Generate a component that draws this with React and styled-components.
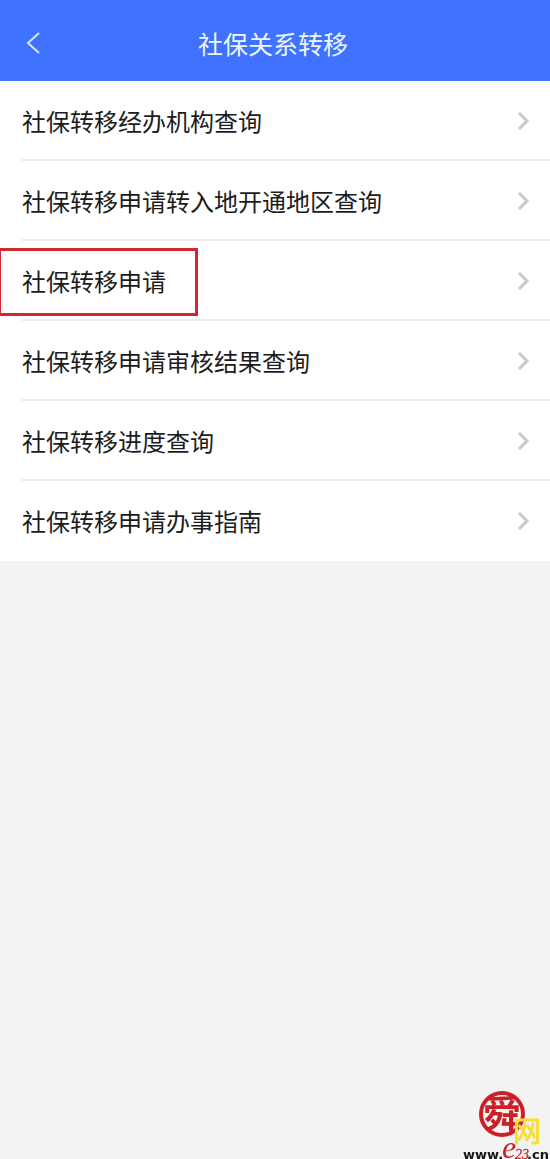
import React from "react";
import styled, { createGlobalStyle } from "styled-components";

const GlobalStyle = createGlobalStyle`
  * { box-sizing: border-box; }
  body {
    margin: 0;
    background: #f3f3f3;
    font-family: "Noto Sans CJK SC", sans-serif;
  }
`;

const Page = styled.div`
  min-height: 100vh;
  background: #f3f3f3;
`;

const Header = styled.header`
  display: grid;
  grid-template-columns: 64px 1fr 68px;
  align-items: center;
  height: 81px;
  padding-top: 4px;
  background: #3f73ff;
  color: #eef5ff;
`;

const BackButton = styled.button`
  display: flex;
  align-items: center;
  height: 48px;
  padding: 0 0 0 24px;
  border: 0;
  background: none;
  color: #d5e6ff;
  cursor: pointer;
`;

const Title = styled.h1`
  margin: 0;
  font-size: 25px;
  font-weight: 400;
  line-height: 36px;
  text-align: center;
`;

const Menu = styled.ul`
  margin: 0;
  padding: 0;
  list-style: none;
  background: #fff;
`;

const MenuItem = styled.li`
  position: relative;
  padding-left: 22px;

  &:last-child > a {
    border-bottom-color: transparent;
  }
`;

const MenuLink = styled.a`
  display: flex;
  align-items: center;
  justify-content: space-between;
  height: 80px;
  padding: 2px 20px 0 0;
  border-bottom: 2px solid #ececec;
  color: #1c1c1c;
  font-size: 24px;
  line-height: 36px;
  text-decoration: none;
`;

const Highlight = styled.span`
  position: absolute;
  top: 7px;
  left: -2px;
  width: 200px;
  height: 68px;
  border: 3px solid #d0282e;
  pointer-events: none;
`;

const Watermark = styled.div`
  position: fixed;
  right: 0;
  bottom: 0;
  width: 88px;
  height: 70px;
  pointer-events: none;
`;

const items = [
  { label: "社保转移经办机构查询" },
  { label: "社保转移申请转入地开通地区查询" },
  { label: "社保转移申请", highlighted: true },
  { label: "社保转移申请审核结果查询" },
  { label: "社保转移进度查询" },
  { label: "社保转移申请办事指南" },
];

function BackIcon() {
  return (
    <svg width="18" height="24" viewBox="0 0 18 24" fill="none" stroke="currentColor" strokeWidth="2" aria-hidden="true">
      <path d="M15 2 4 12l11 10" />
    </svg>
  );
}

function ChevronIcon() {
  return (
    <svg width="14" height="20" viewBox="0 0 14 20" fill="none" stroke="#c8c8c8" strokeWidth="3" aria-hidden="true">
      <path d="m3 2 8 8-8 8" />
    </svg>
  );
}

function SiteLogo() {
  return (
    <svg width="88" height="70" viewBox="0 0 88 70" role="img" aria-label="舜网 www.e23.cn">
      <circle cx="40" cy="25" r="21" fill="#fbf5f4" stroke="#cc2029" strokeWidth="4" />
      <text x="40" y="39" textAnchor="middle" fontFamily="'Noto Sans CJK SC', sans-serif" fontSize="37" fontWeight="700" fill="#cc2029">舜</text>
      <text x="51" y="53" fontFamily="'Noto Sans CJK SC', sans-serif" fontSize="28" fontWeight="400" fill="#f8de35" stroke="#f8de35" strokeWidth="1">网</text>
      <g fontFamily="'DejaVu Sans', sans-serif" fontSize="13" fontWeight="700" fill="#171717">
        <text x="1" y="70">www.</text>
        <text x="65" y="70">.cn</text>
      </g>
      <g fontFamily="'Liberation Serif', serif" fontStyle="italic" fill="#cc2029">
        <text x="40" y="69" fontSize="32">e</text>
        <text x="53" y="70" fontSize="14" stroke="#cc2029" strokeWidth="0.3">23</text>
      </g>
    </svg>
  );
}

export default function App() {
  return (
    <Page>
      <GlobalStyle />
      <Header>
        <BackButton type="button" aria-label="返回">
          <BackIcon />
        </BackButton>
        <Title>社保关系转移</Title>
      </Header>
      <main>
        <Menu>
          {items.map((item) => (
            <MenuItem key={item.label}>
              <MenuLink href="#">
                {item.label}
                <ChevronIcon />
              </MenuLink>
              {item.highlighted && <Highlight />}
            </MenuItem>
          ))}
        </Menu>
      </main>
      <Watermark>
        <SiteLogo />
      </Watermark>
    </Page>
  );
}
